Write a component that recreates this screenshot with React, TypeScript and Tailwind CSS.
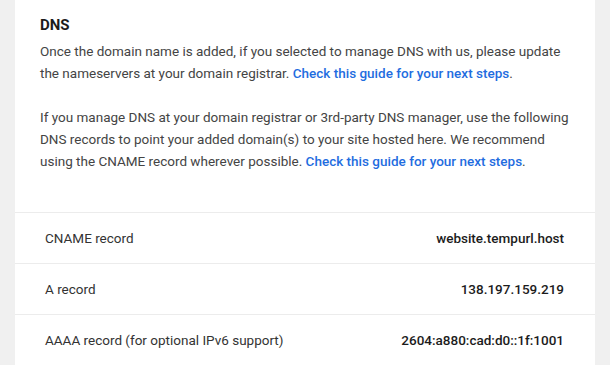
import React from "react";

const rows = [
  { label: "CNAME record", value: "website.tempurl.host" },
  { label: "A record", value: "138.197.159.219" },
  { label: "AAAA record (for optional IPv6 support)", value: "2604:a880:cad:d0::1f:1001" },
];

export default function App() {
  return (
    <div
      className="w-[610px] h-[365px] bg-[#f0f0f0] overflow-hidden px-[15px]"
      style={{ fontFamily: "Roboto, 'Noto Sans', sans-serif" }}
    >
      <div className="bg-white h-full">
        <div className="pl-[25px] pr-[20px] pt-[14px] pb-[40px]">
          <h2 className="text-[15px] font-bold text-[#1c1c1c] leading-[22px]">DNS</h2>
          <p className="mt-[4px] text-[13.5px] leading-[22px] text-[#444] whitespace-nowrap">
            Once the domain name is added, if you selected to manage DNS with us, please update
            <br />
            the nameservers at your domain registrar.{" "}
            <a className="text-[#1f6de0] font-medium">Check this guide for your next steps</a>.
          </p>
          <p className="mt-[22px] text-[13.5px] leading-[22px] text-[#444] whitespace-nowrap">
            If you manage DNS at your domain registrar or 3rd-party DNS manager, use the following
            <br />
            DNS records to point your added domain(s) to your site hosted here. We recommend
            <br />
            using the CNAME record wherever possible.{" "}
            <a className="text-[#1f6de0] font-medium">Check this guide for your next steps</a>.
          </p>
        </div>
        <div>
          {rows.map((r) => (
            <div
              key={r.label}
              className="border-t border-[#ececec] h-[51px] flex items-center justify-between pl-[30px] pr-[31px] text-[13.5px]"
            >
              <span className="text-[#333]">{r.label}</span>
              <span className="text-[#1c1c1c] font-medium">{r.value}</span>
            </div>
          ))}
        </div>
      </div>
    </div>
  );
}
